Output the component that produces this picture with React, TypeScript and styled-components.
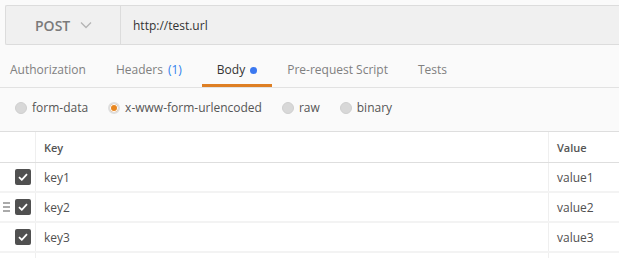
import React from 'react';
import styled, { createGlobalStyle } from 'styled-components';

const GlobalStyle = createGlobalStyle`
  html, body {
    margin: 0;
    padding: 0;
    background: #fafafa;
    font-family: "Open Sans", "Liberation Sans", sans-serif;
    overflow: hidden;
  }
`;

const Page = styled.div`
  width: 619px;
  height: 258px;
  overflow: hidden;
`;

const RequestBar = styled.div`
  display: flex;
  height: 38px;
  margin: 5px 0 0 5px;
  background: #f0f0f0;
  border: 1px solid #dcdcdc;
  border-right: none;
  border-radius: 2px 0 0 2px;
`;

const MethodSelect = styled.div`
  display: flex;
  align-items: center;
  width: 115px;
  box-sizing: border-box;
  padding-left: 29px;
  border-right: 1px solid #dcdcdc;
  font-size: 14px;
  font-weight: 600;
  color: #7a7a7a;
`;

const Chevron = styled.svg`
  margin-left: 10px;
  width: 12px;
  height: 8px;
`;

const UrlInput = styled.div`
  display: flex;
  align-items: center;
  padding-left: 12px;
  font-size: 12px;
  color: #333;
`;

const TabBar = styled.div`
  display: flex;
  margin-left: -5px;
  border-bottom: 1px solid #e2e2e2;
`;

const Tab = styled.div<{ $active?: boolean }>`
  display: flex;
  align-items: center;
  padding: 16px 15px 5px;
  line-height: 18px;
  font-size: 12px;
  color: ${(p) => (p.$active ? '#333' : '#808080')};
  border-bottom: 3px solid ${(p) => (p.$active ? '#de7f24' : 'transparent')};
`;

const Count = styled.span`
  margin: 0 5px 0 5px;
  color: #2f80ed;
`;

const Dot = styled.span`
  width: 7px;
  height: 7px;
  margin-left: 5px;
  border-radius: 50%;
  background: #3b78f0;
`;

const ModeRow = styled.div`
  display: flex;
  align-items: center;
  height: 39px;
  padding: 0 0 4px 15px;
  gap: 20px;
`;

const ModeOption = styled.label`
  display: flex;
  align-items: center;
  gap: 5px;
  font-size: 12px;
  color: #555;
`;

const Radio = styled.span<{ $checked?: boolean }>`
  box-sizing: border-box;
  width: 12px;
  height: 12px;
  border-radius: 50%;
  background: ${(p) => (p.$checked ? '#e8861e' : '#d8d8d8')};
  border: ${(p) => (p.$checked ? '2px solid #dedede' : '1px solid #cfcfcf')};
  box-shadow: ${(p) => (p.$checked ? 'inset 0 0 0 1px #fff' : 'none')};
`;

const Table = styled.div`
  background: #fff;
  border-top: 1px solid #dedede;
`;

const Row = styled.div<{ $header?: boolean }>`
  display: grid;
  grid-template-columns: 36px 512px 1fr;
  height: ${(p) => (p.$header ? '30px' : '28px')};
  border-bottom: ${(p) => (p.$header ? '1px solid #dedede' : '2px solid #f3f3f3')};
`;

const HandleCell = styled.div`
  display: flex;
  align-items: center;
  justify-content: flex-end;
  gap: 5px;
  padding-right: 4px;
  border-right: 1px solid #efefef;
`;

const Cell = styled.div<{ $header?: boolean }>`
  display: flex;
  align-items: center;
  padding-left: 8px;
  font-size: ${(p) => (p.$header ? '11px' : '12px')};
  font-weight: ${(p) => (p.$header ? 600 : 400)};
  color: ${(p) => (p.$header ? '#555' : '#505050')};
  & + & {
    border-left: 1px solid #efefef;
  }
`;

const CheckBox = styled.span`
  display: flex;
  align-items: center;
  justify-content: center;
  width: 16px;
  height: 16px;
  border-radius: 2px;
  background: #505050;
`;

const Handle = () => (
  <svg width="7" height="10" viewBox="0 0 7 10">
    <rect x="0" y="0" width="7" height="2" fill="#aaa" />
    <rect x="0" y="4" width="7" height="2" fill="#aaa" />
    <rect x="0" y="8" width="7" height="2" fill="#aaa" />
  </svg>
);

const Check = () => (
  <CheckBox>
    <svg width="10" height="8" viewBox="0 0 10 8">
      <path d="M1 4.2 L3.8 6.8 L9 1.2" fill="none" stroke="#fff" strokeWidth="1.8" />
    </svg>
  </CheckBox>
);

const rows = [
  { key: 'key1', value: 'value1' },
  { key: 'key2', value: 'value2', handle: true },
  { key: 'key3', value: 'value3' },
];

export default function App() {
  return (
    <Page>
      <GlobalStyle />
      <RequestBar>
        <MethodSelect>
          POST
          <Chevron viewBox="0 0 12 8">
            <path d="M1 1.5 L6 6.5 L11 1.5" fill="none" stroke="#b5b5b5" strokeWidth="1.3" />
          </Chevron>
        </MethodSelect>
        <UrlInput>http://test.url</UrlInput>
      </RequestBar>

      <TabBar>
        <Tab>Authorization</Tab>
        <Tab>
          Headers<Count>(1)</Count>
        </Tab>
        <Tab $active>
          Body<Dot />
        </Tab>
        <Tab>Pre-request Script</Tab>
        <Tab>Tests</Tab>
      </TabBar>

      <ModeRow>
        <ModeOption><Radio />form-data</ModeOption>
        <ModeOption><Radio $checked />x-www-form-urlencoded</ModeOption>
        <ModeOption><Radio />raw</ModeOption>
        <ModeOption><Radio />binary</ModeOption>
      </ModeRow>

      <Table>
        <Row $header>
          <HandleCell />
          <Cell $header>Key</Cell>
          <Cell $header>Value</Cell>
        </Row>
        {rows.map((r) => (
          <Row key={r.key}>
            <HandleCell>
              {r.handle && <Handle />}
              <Check />
            </HandleCell>
            <Cell>{r.key}</Cell>
            <Cell>{r.value}</Cell>
          </Row>
        ))}
        <Row>
          <HandleCell />
          <Cell />
          <Cell />
        </Row>
      </Table>
    </Page>
  );
}
